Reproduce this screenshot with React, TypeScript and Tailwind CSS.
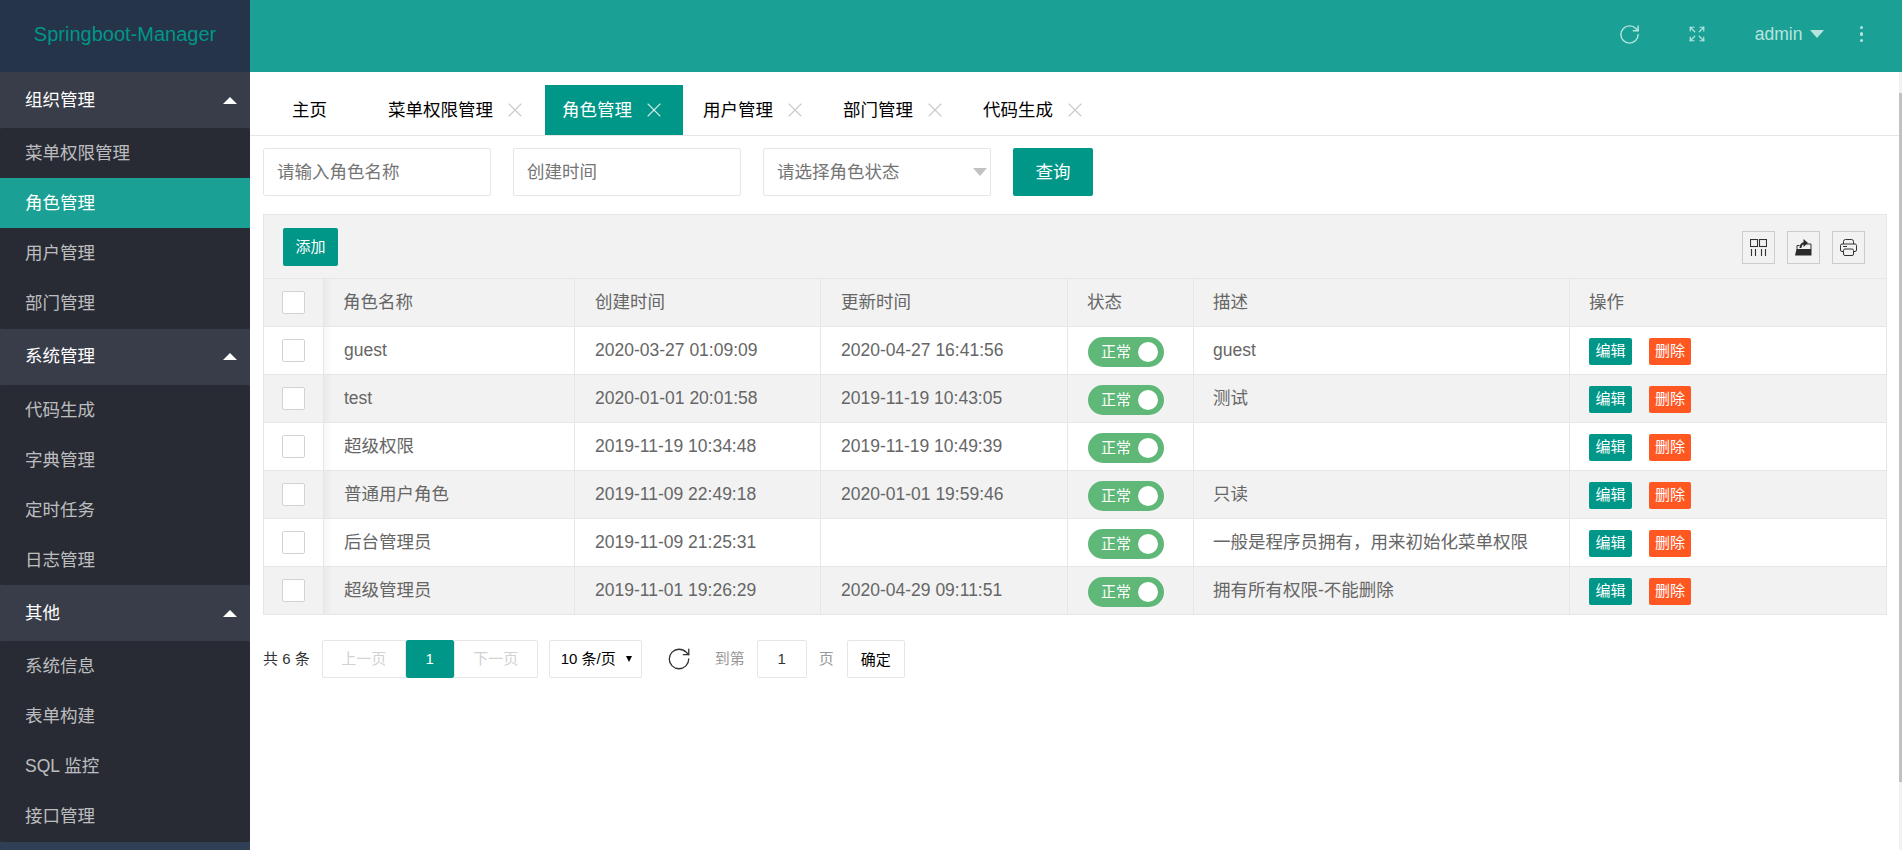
import { Expand, RotateCw, X } from 'lucide-react'

const menu = [
  { title: '组织管理', items: ['菜单权限管理', '角色管理', '用户管理', '部门管理'] },
  { title: '系统管理', items: ['代码生成', '字典管理', '定时任务', '日志管理'] },
  { title: '其他', items: ['系统信息', '表单构建', 'SQL 监控', '接口管理'] },
]

const tabs = ['菜单权限管理', '角色管理', '用户管理', '部门管理', '代码生成']

const roles = [
  { name: 'guest', created: '2020-03-27 01:09:09', updated: '2020-04-27 16:41:56', desc: 'guest' },
  { name: 'test', created: '2020-01-01 20:01:58', updated: '2019-11-19 10:43:05', desc: '测试' },
  { name: '超级权限', created: '2019-11-19 10:34:48', updated: '2019-11-19 10:49:39', desc: '' },
  { name: '普通用户角色', created: '2019-11-09 22:49:18', updated: '2020-01-01 19:59:46', desc: '只读' },
  { name: '后台管理员', created: '2019-11-09 21:25:31', updated: '', desc: '一般是程序员拥有，用来初始化菜单权限' },
  { name: '超级管理员', created: '2019-11-01 19:26:29', updated: '2020-04-29 09:11:51', desc: '拥有所有权限-不能删除' },
]

function Sidebar() {
  return (
    <aside className="flex h-full w-[250px] shrink-0 flex-col bg-[#2f4056]">
      <div className="flex h-[72px] items-center justify-center bg-[#253449] pb-[4px] text-[20px] text-[#009688]">
        Springboot-Manager
      </div>
      {menu.map((group) => (
        <div key={group.title} className="bg-[#393d49]">
          <div className="flex h-[56px] items-center justify-between pl-[25px] pr-[13px] text-[17.5px] text-white">
            {group.title}
            <span className="h-0 w-0 border-x-[7px] border-b-[7px] border-x-transparent border-b-white" />
          </div>
          <div className="rounded-[2px] bg-[#282b33]">
            {group.items.map((item) =>
              item === '角色管理' ? (
                <div key={item} className="flex h-[50.15px] items-center bg-[#1aa094] pl-[25px] text-[17.5px] text-white">
                  {item}
                </div>
              ) : (
                <div key={item} className="flex h-[50.15px] items-center pl-[25px] text-[17.5px] text-white/70">
                  {item}
                </div>
              ),
            )}
          </div>
        </div>
      ))}
    </aside>
  )
}

function Header() {
  return (
    <header className="flex h-[72px] shrink-0 items-center justify-end bg-[#1aa094] pb-[4px] pr-[39px] text-[#b8e4df]">
      <RotateCw size={23} strokeWidth={1.5} />
      <Expand size={18} strokeWidth={1.6} className="ml-[47px]" />
      <span className="ml-[49px] text-[17.5px]">admin</span>
      <span className="ml-[7px] h-0 w-0 border-x-[7.5px] border-t-[8px] border-x-transparent border-t-[#b8e4df]" />
      <span className="ml-[36px] flex flex-col gap-[3px]">
        <i className="size-[3.5px] rounded-full bg-[#b8e4df]" />
        <i className="size-[3.5px] rounded-full bg-[#b8e4df]" />
        <i className="size-[3.5px] rounded-full bg-[#b8e4df]" />
      </span>
    </header>
  )
}

function TabBar() {
  return (
    <div className="flex h-[64px] items-end border-b border-[#e6e6e6] pl-[42px] text-[17.5px] text-black">
      <div className="flex h-[50px] w-[78px] items-center">主页</div>
      {tabs.map((tab) =>
        tab === '角色管理' ? (
          <div key={tab} className="mr-[2px] flex h-[50px] items-center bg-[#009688] pl-[17px] pr-[17px] text-white">
            {tab}
            <X size={24} strokeWidth={1.1} className="ml-[10px] text-white/80" />
          </div>
        ) : (
          <div key={tab} className="flex h-[50px] items-center pl-[18px] pr-[18px]">
            {tab}
            <X size={24} strokeWidth={1.1} className="ml-[10px] text-[#c9c9c9]" />
          </div>
        ),
      )}
    </div>
  )
}

function SearchBar() {
  return (
    <div className="flex gap-[22px] pt-3 text-[17.5px]">
      <input
        placeholder="请输入角色名称"
        className="h-[48px] w-[228px] rounded-[2px] border border-[#e6e6e6] px-[13px] outline-none placeholder:text-[#757575]"
      />
      <input
        placeholder="创建时间"
        className="h-[48px] w-[228px] rounded-[2px] border border-[#e6e6e6] px-[13px] outline-none placeholder:text-[#757575]"
      />
      <div className="flex h-[48px] w-[228px] items-center justify-between rounded-[2px] border border-[#e6e6e6] pl-[13px] pr-[3px] text-[#757575]">
        请选择角色状态
        <span className="h-0 w-0 border-x-[7.5px] border-t-[8px] border-x-transparent border-t-[#c2c2c2]" />
      </div>
      <button className="h-[48px] w-[80px] rounded-[2px] bg-[#009688] text-white">查询</button>
    </div>
  )
}

function ColsIcon() {
  return (
    <svg width="17" height="17" viewBox="0 0 17 17" fill="none" stroke="#333" strokeWidth="1.1">
      <rect x="0.5" y="0.5" width="7" height="7" />
      <rect x="9.5" y="0.5" width="7" height="7" />
      <path d="M1.5 10v7M5.5 10v7M11.5 10v7M15.5 10v7" />
    </svg>
  )
}

function ExportIcon() {
  return (
    <svg width="17" height="18" viewBox="0 0 17 18">
      <path d="M0 17.5 1.5 11H16.5V17.5Z" fill="#2b2b2b" />
      <path d="M2 11V7.5H4.5M11.5 6H16V11" fill="none" stroke="#333" />
      <path d="M4.5 10C4.5 6.5 6.5 4.5 8.5 4.2V1L13 5 8.5 9V6.2C7.5 6.5 6.5 8 6.5 10Z" fill="#2b2b2b" />
    </svg>
  )
}

function PrintIcon() {
  return (
    <svg width="17" height="17" viewBox="0 0 17 17" fill="none" stroke="#333" strokeWidth="1">
      <path d="M3.5 5V2.5a2 2 0 0 1 2-2h6a2 2 0 0 1 2 2V5" />
      <path d="M3 12.5H2a1.5 1.5 0 0 1-1.5-1.5V6.5A1.5 1.5 0 0 1 2 5h13a1.5 1.5 0 0 1 1.5 1.5V11a1.5 1.5 0 0 1-1.5 1.5h-1" />
      <rect x="3.5" y="10" width="10" height="6.5" rx="1.5" />
      <path d="M3 7.5h4" />
    </svg>
  )
}

function Toolbar() {
  return (
    <div className="flex h-[64px] items-center justify-between border-b border-[#e6e6e6] pl-[19px] pr-[21px] pt-[1px]">
      <button className="h-[38px] w-[55px] rounded-[2px] bg-[#009688] text-[15px] text-white">添加</button>
      <div className="flex gap-[12px]">
        <div className="flex size-[33px] items-center justify-center border border-[#ccc]">
          <ColsIcon />
        </div>
        <div className="flex size-[33px] items-center justify-center border border-[#ccc]">
          <ExportIcon />
        </div>
        <div className="flex size-[33px] items-center justify-center border border-[#ccc]">
          <PrintIcon />
        </div>
      </div>
    </div>
  )
}

function Checkbox() {
  return <div className="mx-auto size-[23px] rounded-[2px] border border-[#d2d2d2] bg-white" />
}

function RoleTable() {
  const th = 'h-[48px] border-b border-r border-[#e6e6e6] pl-[20px] text-left font-normal'
  const thTight = 'h-[48px] border-b border-r border-[#e6e6e6] pl-[19px] text-left font-normal'
  const td = 'h-[48px] border-b border-r border-[#e6e6e6] pl-[20px]'
  const shade = 'bg-[linear-gradient(to_right,rgba(0,0,0,0.035),transparent_8px)]'
  return (
    <table className="w-full table-fixed border-separate border-spacing-0 text-[17.5px] text-[#666]">
      <colgroup>
        <col className="w-[60px]" />
        <col className="w-[251px]" />
        <col className="w-[246px]" />
        <col className="w-[247px]" />
        <col className="w-[126px]" />
        <col className="w-[376px]" />
        <col />
      </colgroup>
      <thead>
        <tr>
          <th className="h-[48px] border-b border-r border-[#e6e6e6]">
            <Checkbox />
          </th>
          <th className={`${thTight} ${shade}`}>角色名称</th>
          <th className={th}>创建时间</th>
          <th className={th}>更新时间</th>
          <th className={thTight}>状态</th>
          <th className={thTight}>描述</th>
          <th className="h-[48px] border-b border-[#e6e6e6] pl-[19px] text-left font-normal">操作</th>
        </tr>
      </thead>
      <tbody>
        {roles.map((r, i) => (
          <tr key={r.name} className={i % 2 === 0 ? 'bg-white' : 'bg-[#f2f2f2]'}>
            <td className="h-[48px] border-b border-r border-[#e6e6e6]">
              <Checkbox />
            </td>
            <td className={`${td} ${shade}`}>{r.name}</td>
            <td className={td}>{r.created}</td>
            <td className={td}>{r.updated}</td>
            <td className={td}>
              <div className="mt-[3px] flex h-[30px] w-[76px] items-center justify-between rounded-full bg-[#5fb878] pl-[13px] pr-[6px] text-[15px] text-white">
                正常
                <span className="size-[20px] rounded-full bg-white" />
              </div>
            </td>
            <td className="h-[48px] border-b border-r border-[#e6e6e6] pl-[19px]">{r.desc}</td>
            <td className="h-[48px] border-b border-[#e6e6e6] pl-[19px]">
              <div className="mt-[2px] flex gap-[17px] text-[15px] text-white">
                <button className="h-[27px] w-[43px] rounded-[2px] bg-[#009688]">编辑</button>
                <button className="h-[27px] w-[42px] rounded-[2px] bg-[#ff5722]">删除</button>
              </div>
            </td>
          </tr>
        ))}
      </tbody>
    </table>
  )
}

function Pager() {
  return (
    <div className="mt-[25px] flex items-center text-[15px] text-[#333]">
      <span>共 6 条</span>
      <div className="ml-[12px] flex h-[38px] w-[84px] items-center justify-center rounded-l-[2px] border border-[#e6e6e6] text-[#d2d2d2]">
        上一页
      </div>
      <div className="flex h-[38px] w-[48px] items-center justify-center rounded-[2px] bg-[#009688] text-white">1</div>
      <div className="flex h-[38px] w-[84px] items-center justify-center rounded-r-[2px] border border-[#e6e6e6] text-[#d2d2d2]">
        下一页
      </div>
      <div className="ml-[11px] flex h-[38px] w-[93px] items-center justify-between rounded-[2px] border border-[#e6e6e6] pl-[11px] pr-[9px] text-black">
        10 条/页
        <span className="h-0 w-0 border-x-[3.5px] border-t-[6px] border-x-transparent border-t-black" />
      </div>
      <RotateCw size={26} strokeWidth={1.2} className="ml-[24px] text-[#333]" />
      <span className="ml-[23px] text-[#999]">到第</span>
      <div className="ml-[12px] flex h-[38px] w-[50px] items-center justify-center rounded-[2px] border border-[#e6e6e6]">
        1
      </div>
      <span className="ml-[12px] text-[#999]">页</span>
      <button className="ml-[13px] h-[38px] w-[58px] rounded-[2px] border border-[#e6e6e6] pt-[3px] text-black">确定</button>
    </div>
  )
}

export default function App() {
  return (
    <div className="flex h-[850px] w-full overflow-hidden bg-white font-['Liberation_Sans','Noto_Sans_CJK_SC',sans-serif]">
      <Sidebar />
      <div className="flex min-w-0 flex-1 flex-col">
        <Header />
        <div className="flex min-h-0 flex-1">
          <main className="min-w-0 flex-1">
            <TabBar />
            <div className="pl-[13px] pr-[12px]">
              <SearchBar />
              <div className="mt-[18px] border-x border-t border-[#e6e6e6] bg-[#f2f2f2]">
                <Toolbar />
                <RoleTable />
              </div>
              <Pager />
            </div>
          </main>
          {/* the page's own scrollbar, only its edge shows */}
          <div className="w-[3px] shrink-0 bg-[#f1f1f1]">
            <div className="mt-[21px] h-[689px] bg-[#c1c1c1]" />
          </div>
        </div>
      </div>
    </div>
  )
}
